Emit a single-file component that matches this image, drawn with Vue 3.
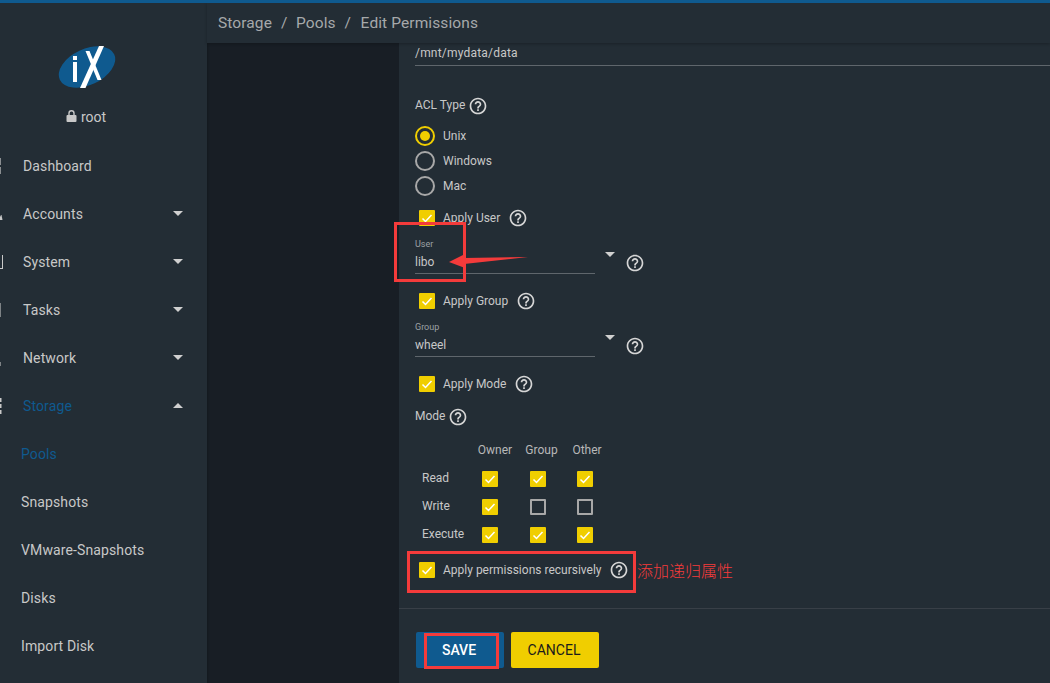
<script setup>
const nav = [
  { label: 'Dashboard', icon: 'dash' },
  { label: 'Accounts', icon: 'acc', caret: 'down' },
  { label: 'System', icon: 'sys', caret: 'down' },
  { label: 'Tasks', icon: 'task', caret: 'down' },
  { label: 'Network', icon: 'net', caret: 'down' },
  { label: 'Storage', icon: 'stor', caret: 'up', active: true }
]
const sub = [
  { label: 'Pools', active: true },
  { label: 'Snapshots' },
  { label: 'VMware-Snapshots' },
  { label: 'Disks' },
  { label: 'Import Disk' }
]
const perms = [
  { label: 'Read', v: [1, 1, 1] },
  { label: 'Write', v: [1, 0, 0] },
  { label: 'Execute', v: [1, 1, 1] }
]
</script>

<template>
  <div class="page">
    <aside class="side">
      <div class="logo">
        <svg width="58" height="44" viewBox="0 0 58 44">
          <ellipse cx="29" cy="22" rx="30" ry="18" transform="rotate(-25 29 22)" fill="#0f5a8f" />
          <rect x="15" y="17" width="4" height="20" fill="#fff" />
          <rect x="15" y="11" width="4" height="4" fill="#fff" />
          <path d="M27.500 6h4l12 29h-4z" fill="#fff" />
          <path d="M41 1h5L27.500 43H22z" fill="#fff" />
        </svg>
      </div>
      <div class="user">
        <svg class="lock" width="11" height="12" viewBox="0 0 11 12">
          <path d="M5.500 0a3.200 3.200 0 0 0-3.200 3.200V5H1.500A1 1 0 0 0 .5 6v5a1 1 0 0 0 1 1h8a1 1 0 0 0 1-1V6a1 1 0 0 0-1-1h-.8V3.200A3.200 3.200 0 0 0 5.500 0zm0 1.400a1.800 1.800 0 0 1 1.800 1.800V5H3.700V3.200a1.800 1.800 0 0 1 1.800-1.800z" fill="#c8c8c8" />
        </svg>
        <span>root</span>
      </div>
      <nav class="menu">
        <div v-for="n in nav" :key="n.label" class="item" :class="{ active: n.active }">
          <svg class="ico" width="4" height="16" viewBox="0 0 4 16">
            <g v-if="n.icon === 'dash'" fill="#8a8e91"><rect x="0" y="0" width="1" height="7" /><rect x="0" y="9" width="1" height="7" /></g>
            <path v-else-if="n.icon === 'acc'" d="M0 14V11l1-2h.5L2.500 14z" fill="#c8c8c8" />
            <path v-else-if="n.icon === 'sys'" d="M2 1h1v14H0v-1h2z" fill="#c8c8c8" />
            <rect v-else-if="n.icon === 'task'" x="0" y="1" width="1" height="14" fill="#7d8285" />
            <rect v-else-if="n.icon === 'net'" x="0" y="12" width="1" height="4" fill="#7d8285" />
            <g v-else fill="#c8c8c8"><rect x="0" y="0" width="1.500" height="4" /><rect x="0" y="6" width="1.500" height="4" /><rect x="0" y="12" width="1.500" height="4" /></g>
          </svg>
          <span class="lbl">{{ n.label }}</span>
          <span v-if="n.caret" class="caret" :class="n.caret"></span>
        </div>
        <div v-for="s in sub" :key="s.label" class="item subitem" :class="{ active: s.active }">
          <span class="lbl">{{ s.label }}</span>
        </div>
      </nav>
    </aside>

    <div class="main">
      <header class="crumbs">
        <span>Storage</span><i>/</i><span>Pools</span><i class="last">/</i><span>Edit Permissions</span>
      </header>
      <div class="body">
        <div class="gutter"></div>
        <section class="card">
          <div class="form">
            <div class="path">/mnt/mydata/data</div>

            <div class="heading acl"><span>ACL Type</span><svg class="help" viewBox="0 0 24 24"><use href="#help" /></svg></div>

            <div class="radios">
              <div class="radio on"><span class="ring"></span>Unix</div>
              <div class="radio"><span class="ring"></span>Windows</div>
              <div class="radio"><span class="ring"></span>Mac</div>
            </div>

            <div class="check first">
              <span class="box on"><svg viewBox="0 0 16 16"><path d="M3.500 8.500l3 3 6-6.500" /></svg></span>
              <span class="txt">Apply User</span>
              <svg class="help" viewBox="0 0 24 24"><use href="#help" /></svg>
            </div>

            <div class="selectrow">
              <div class="select">
                <label>User</label>
                <div class="val">libo</div>
              </div>
              <span class="caret down sel"></span>
              <svg class="help" viewBox="0 0 24 24"><use href="#help" /></svg>
              <div class="mark userbox"></div>
              <svg class="arrow" width="80" height="14" viewBox="0 0 80 14"><path d="M0 8L16 0l-1 4 64-1-64 7 1 4z" fill="#f43b3b" /></svg>
            </div>

            <div class="check">
              <span class="box on"><svg viewBox="0 0 16 16"><path d="M3.500 8.500l3 3 6-6.500" /></svg></span>
              <span class="txt">Apply Group</span>
              <svg class="help" viewBox="0 0 24 24"><use href="#help" /></svg>
            </div>

            <div class="selectrow">
              <div class="select">
                <label>Group</label>
                <div class="val">wheel</div>
              </div>
              <span class="caret down sel"></span>
              <svg class="help" viewBox="0 0 24 24"><use href="#help" /></svg>
            </div>

            <div class="check">
              <span class="box on"><svg viewBox="0 0 16 16"><path d="M3.500 8.500l3 3 6-6.500" /></svg></span>
              <span class="txt">Apply Mode</span>
              <svg class="help" viewBox="0 0 24 24"><use href="#help" /></svg>
            </div>

            <div class="heading mode"><span>Mode</span><svg class="help" viewBox="0 0 24 24"><use href="#help" /></svg></div>

            <div class="grid">
              <span></span><span class="gh owner">Owner</span><span class="gh group">Group</span><span class="gh other">Other</span>
              <template v-for="p in perms" :key="p.label">
                <span class="rowlbl">{{ p.label }}</span>
                <span v-for="(x, i) in p.v" :key="i" class="cell">
                  <span class="box" :class="{ on: x }"><svg v-if="x" viewBox="0 0 16 16"><path d="M3.500 8.500l3 3 6-6.500" /></svg></span>
                </span>
              </template>
            </div>

            <div class="check recur">
              <span class="box on"><svg viewBox="0 0 16 16"><path d="M3.500 8.500l3 3 6-6.500" /></svg></span>
              <span class="txt">Apply permissions recursively</span>
              <svg class="help" viewBox="0 0 24 24"><use href="#help" /></svg>
              <div class="mark recurbox"></div>
              <span class="note">添加递归属性</span>
            </div>
          </div>

          <div class="actions">
            <button class="btn save">SAVE<span class="mark savebox"></span></button>
            <button class="btn cancel">CANCEL</button>
          </div>
        </section>
      </div>
    </div>

    <svg width="0" height="0" class="defs">
      <symbol id="help" viewBox="0 0 24 24">
        <path fill="#d6d6d6" d="M11 18h2v-2h-2v2zm1-16C6.480 2 2 6.480 2 12s4.480 10 10 10 10-4.480 10-10S17.520 2 12 2zm0 18c-4.410 0-8-3.590-8-8s3.590-8 8-8 8 3.590 8 8-3.590 8-8 8zm0-14c-2.210 0-4 1.790-4 4h2c0-1.100.9-2 2-2s2 .9 2 2c0 2-3 1.750-3 5h2c0-2.250 3-2.500 3-5 0-2.210-1.790-4-4-4z" />
      </symbol>
    </svg>
  </div>
</template>

<style>
html, body { margin: 0; background: #181e25; overflow: hidden; }
</style>

<style scoped>
.page {
  position: relative;
  display: flex;
  width: 1050px;
  height: 683px;
  overflow: hidden;
  box-sizing: border-box;
  border-top: 3px solid #0f5a8f;
  background: #181e25;
  color: #c8c8c8;
  font-family: Roboto, "Noto Sans CJK SC", sans-serif;
  font-size: 12px;
}
.defs { position: absolute; }
.side {
  flex: 0 0 207px;
  background: #232d35;
  box-shadow: 1px 0 2px rgba(0,0,0,.2);
}
.logo { display: flex; justify-content: center; width: 174px; padding-top: 42px; height: 44px; }
.user {
  display: flex; align-items: center; justify-content: center; gap: 4px;
  width: 172px; margin-top: 20px; font-size: 14px; color: #c8c8c8; height: 16px;
}
.lock { margin-top: -3px; }
.menu { margin-top: 17px; }
.item {
  position: relative;
  display: flex; align-items: center;
  height: 48px;
  font-size: 14px;
  letter-spacing: .12px;
  color: #c8c8c8;
}
.item .ico { flex: none; width: 4px; }
.item .lbl { margin-left: 19px; }
.subitem .lbl { margin-left: 21px; }
.item.active { color: #0f5a8f; }
.caret { width: 0; height: 0; border-left: 5.500px solid transparent; border-right: 5.500px solid transparent; }
.caret.down { border-top: 5.500px solid #d0d0d0; }
.caret.up { border-bottom: 5.500px solid #d0d0d0; }
.item .caret { position: absolute; left: 173px; top: 21px; }
.main { flex: 1; min-width: 0; display: flex; flex-direction: column; }
.crumbs {
  height: 40px; flex: none;
  background: #232d35;
  display: flex; align-items: center;
  padding-left: 11px;
  font-size: 15.500px;
  letter-spacing: .1px;
  color: #a6a9ab;
  box-shadow: 0 1px 3px rgba(0,0,0,.25);
  position: relative;
  z-index: 2;
}
.crumbs i { font-style: normal; margin: 0 8.500px 0 9px; }
.crumbs i.last { margin-right: 9.500px; }
.body { flex: 1; display: flex; min-height: 0; }
.gutter { flex: 0 0 192px; }
.card { flex: 1; background: #232d35; position: relative; display: flex; flex-direction: column; }
.form { flex: 1; padding-left: 16px; color: #c8c8c8; }
.path {
  height: 22px; line-height: 20px;
  border-bottom: 1px solid #5f666c;
  font-size: 12px;
  letter-spacing: .2px;
}
.heading { display: flex; align-items: center; gap: 3px; font-size: 12px; height: 20px; }
.heading .help { margin-top: 2px; }
.acl { margin-top: 29px; }
.help { width: 20px; height: 20px; flex: none; }
.radios { margin-top: 9px; }
.radio { display: flex; align-items: center; height: 24px; margin-bottom: 1px; gap: 8px; }
.ring { width: 20px; height: 20px; box-sizing: border-box; border: 2px solid #a8a8a8; border-radius: 50%; position: relative; }
.radio.on .ring { border-color: #f0ce00; }
.radio.on .ring::after { content: ''; position: absolute; inset: 3px; background: #f0ce00; border-radius: 50%; }
.box {
  width: 16px; height: 16px; box-sizing: border-box; border: 2px solid #a8a8a8; border-radius: 1px; display: block; flex: none;
}
.box.on { border: 0; background: #f0ce00; }
.box svg { display: block; width: 16px; height: 16px; fill: none; stroke: #fff; stroke-width: 1.500; }
.check { display: flex; align-items: center; height: 20px; margin-left: 4px; position: relative; }
.check .box { margin-right: 8px; }
.check .help { margin-left: 8px; }
.first { margin-top: 10px; }
.selectrow { position: relative; height: 63px; display: flex; align-items: flex-start; }
.select { width: 180px; height: 35px; border-bottom: 1px solid #5f666c; box-sizing: border-box; margin-top: 11px; }
.select label { display: block; font-size: 9px; color: #9da1a4; line-height: 11px; }
.val { font-size: 12px; line-height: 15px; margin-top: 5px; }
.caret.sel { margin-left: 10px; margin-top: 24px; }
.selectrow .help { margin-left: 10px; margin-top: 25px; }
.mark { position: absolute; border: 3px solid #f43b3b; box-sizing: border-box; pointer-events: none; }
.userbox { left: -21px; top: -6px; width: 72px; height: 60px; }
.arrow { position: absolute; left: 34px; top: 26px; }
.heading.mode { margin-top: 12px; }
.grid {
  display: grid;
  grid-template-columns: 44px 48px 48px 46px;
  grid-auto-rows: 28px;
  margin-top: 10px;
  margin-left: 7px;
  align-items: center;
  justify-items: center;
}
.grid .gh { font-size: 12px; color: #b8b8b8; }
.gh.owner { margin-left: 10px; }
.gh.group { margin-left: 7px; }
.gh.other { margin-left: 4px; }
.cell { margin-top: 2px; }
.rowlbl { justify-self: start; font-size: 12px; }
.recur { margin-top: 12px; }
.recur .help { margin-left: 7px; }
.recurbox { left: -12px; top: -9px; width: 229px; height: 42px; }
.note { position: absolute; left: 218px; top: 0; color: #f43b3b; font-size: 16px; white-space: nowrap; line-height: 20px; font-family: "Noto Sans CJK SC", sans-serif; font-weight: 300; }
.actions { border-top: 1px solid #383f47; flex: 0 0 75px; padding: 23px 0 0 17px; display: flex; align-items: flex-start; gap: 7px; box-sizing: border-box; }
.btn {
  position: relative; width: 88px; height: 36px; border: 0; border-radius: 2px; font: 500 14px Roboto, sans-serif; padding: 0 2px 0 0;
}
.save { background: #0f5a8f; color: #fff; }
.cancel { background: #f0ce00; color: #1b1b1b; font-weight: 400; }
.savebox { left: 8px; top: 1px; width: 75px; height: 36px; }
</style>
